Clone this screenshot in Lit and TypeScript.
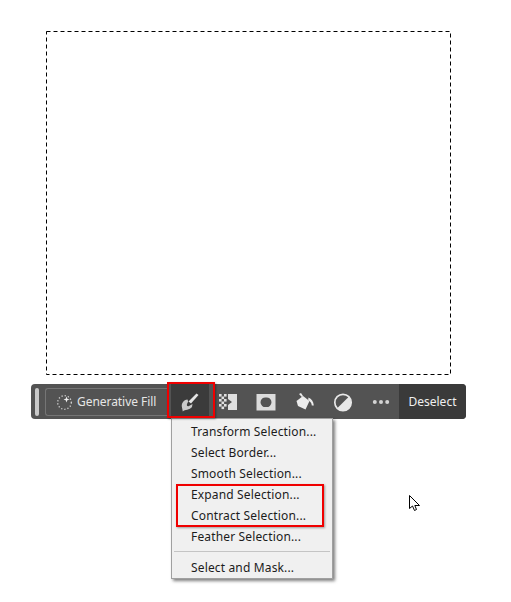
import { LitElement, html, css, svg } from "lit";
import { customElement } from "lit/decorators.js";

const icons = [
  svg`<path d="M15.5 0.5 L17.5 2 L10 10.5 L7.5 8.5 Z" fill="#e6e6e6"/><path d="M6.5 6.5 C2.5 7 0.5 10 0.8 13.5 L1.8 18.5 C4 16 8.5 17.5 11 14 L11.5 11 L8 13 C6.5 13.6 5.5 13 6 11 L7.2 8.5 Z" fill="#cacaca"/>`,
  svg`<g fill="#e0e0e0"><rect x="0" y="1" width="2.6" height="2.6"/><rect x="5" y="1" width="2.6" height="2.6"/><rect x="2.5" y="3.5" width="2.6" height="2.6"/><rect x="0" y="6" width="2.6" height="2.6"/><rect x="5" y="6" width="2.6" height="2.6"/><rect x="2.5" y="8.5" width="2.6" height="2.6"/><rect x="0" y="11" width="2.6" height="2.6"/><rect x="5" y="11" width="2.6" height="2.6"/><rect x="2.5" y="13.5" width="2.6" height="2.6"/><path d="M9 1 H18 V17 H9 V12 L13 9 L9 6 Z"/></g>`,
  svg`<path fill-rule="evenodd" d="M-0.5 1 H18.5 V17.5 H-0.5 Z M9 4.5 A4.8 4.8 0 1 0 9 14 A4.8 4.8 0 1 0 9 4.5 Z" fill="#dcdcdc"/>`,
  svg`<g fill="#ececec"><path d="M3 1 L5 0 L7.2 3.2 L5.8 4 Z"/><path d="M7 3 L13.5 8 L9.5 16.5 L2 13 L0.5 8 Z"/><path d="M12.5 4.5 C15.5 6 17.5 8.5 17.8 12.5 L15.8 12.5 C15.6 10 14.5 8.5 12.2 7 Z"/></g>`,
  svg`<circle cx="9" cy="9.5" r="8.2" fill="none" stroke="#e8e8e8" stroke-width="1.7"/><path d="M14.8 3.7 A8.2 8.2 0 0 1 3.2 15.3 Z" fill="#e8e8e8"/>`,
  svg`<g fill="#d4d4d4"><circle cx="2.8" cy="9" r="2"/><circle cx="9" cy="9" r="2"/><circle cx="15.2" cy="9" r="2"/></g>`,
];

const groups = [
  ["Transform Selection...", "Select Border...", "Smooth Selection...", "Expand Selection...", "Contract Selection...", "Feather Selection..."],
  ["Select and Mask..."],
];

@customElement("app-root")
export class AppRoot extends LitElement {
  static styles = css`
    :host {
      display: block;
      width: 511px;
      height: 602px;
      background: #fff;
      position: relative;
      overflow: hidden;
      font-family: "Noto Sans", sans-serif;
    }
    .page { display: flex; flex-direction: column; padding: 31px 0 0 31px; }
    .marquee { display: block; margin-left: 15px; }
    .marquee rect { fill: none; stroke: #000; stroke-width: 1; stroke-dasharray: 4 3; }
    .bar {
      position: relative;
      margin-top: 9px;
      width: 435px;
      height: 35px;
      display: flex;
      align-items: center;
      background: #535353;
      border-radius: 4px;
      overflow: hidden;
      box-sizing: border-box;
    }
    .grip { width: 4px; height: 28px; margin-left: 4px; background: #c9c9c9; border-radius: 2px; flex: none; }
    .gen {
      margin-left: 6px;
      width: 124px;
      height: 28px;
      box-sizing: border-box;
      border: 1px solid #757575;
      border-right: 0;
      border-radius: 3px 0 0 3px;
      display: flex;
      align-items: center;
      gap: 4px;
      padding-left: 11px;
      color: #e6e6e6;
      font-size: 12px;
      letter-spacing: -0.05px;
      flex: none;
    }
    .gen svg { flex: none; }
    .tools { display: flex; height: 100%; margin-left: 2px; }
    .tool { width: 38.2px; display: flex; align-items: center; justify-content: center; flex: none; }
    .tool.active { background: #3b3b3b; }
    .deselect {
      position: absolute;
      right: 0;
      top: 0;
      bottom: 0;
      width: 67px;
      background: #3a3a3a;
      color: #f0f0f0;
      font-size: 12px;
      display: flex;
      align-items: center;
      justify-content: center;
    }
    .menu {
      position: absolute;
      left: 171px;
      top: 418px;
      width: 162px;
      height: 161px;
      box-sizing: border-box;
      background: #f0f0f0;
      border: 1px solid #a0a0a0;
      box-shadow: 2px 2px 3px rgba(0, 0, 0, 0.5);
      padding: 2px 2px;
      display: flex;
      flex-direction: column;
      color: #1c1c1c;
      font-size: 12px;
      letter-spacing: 0.15px;
    }
    .item { height: 21px; line-height: 21px; padding-left: 17px; white-space: nowrap; flex: none; }
    .sep { height: 1px; background: #c4c4c4; margin: 4px 0 5px; flex: none; }
    .mark {
      position: absolute;
      box-sizing: border-box;
      border: 2px solid #f00000;
      box-shadow: 1px 1px 2px rgba(0, 0, 0, 0.35);
    }
    .mark.tool-mark { left: 167px; top: 382px; width: 48px; height: 36px; }
    .mark.menu-mark { left: 176px; top: 484px; width: 148px; height: 43px; }
    .cursor { position: absolute; left: 409px; top: 495px; display: block; }
  `;

  render() {
    return html`
      <div class="page">
        <svg class="marquee" width="405" height="344"><rect x="0.5" y="0.5" width="404" height="343"></rect></svg>
        <div class="bar">
          <div class="grip"></div>
          <div class="gen">
            <svg width="16" height="18" viewBox="0 0 16 18">
              <circle cx="7.5" cy="9.5" r="6.8" fill="none" stroke="#d8d8d8" stroke-width="1.3" stroke-dasharray="1.2 2"></circle>
              <path d="M9.5 3.5 L10.3 5.7 L12.5 6.5 L10.3 7.3 L9.5 9.5 L8.7 7.3 L6.5 6.5 L8.7 5.7 Z" fill="#f0f0f0"></path>
            </svg>
            <span>Generative Fill</span>
          </div>
          <div class="tools">
            ${icons.map(
              (ic, i) => html`<div class="tool ${i === 0 ? "active" : ""}">
                <svg width="18" height="18" viewBox="0 0 18 18" overflow="visible">${ic}</svg>
              </div>`
            )}
          </div>
          <div class="deselect">Deselect</div>
        </div>
      </div>
      <div class="menu">
        ${groups.map(
          (g, i) => html`${i > 0 ? html`<div class="sep"></div>` : ""}${g.map((t) => html`<div class="item">${t}</div>`)}`
        )}
      </div>
      <div class="mark tool-mark"></div>
      <div class="mark menu-mark"></div>
      <svg class="cursor" width="13" height="18" viewBox="0 0 13 18">
        <path d="M0.5 0.5 V13.5 L3.5 11 L5.5 15.5 L7.5 14.5 L5.8 10.5 H10.5 Z" fill="#fff" stroke="#000" stroke-width="1"></path>
      </svg>
    `;
  }
}
